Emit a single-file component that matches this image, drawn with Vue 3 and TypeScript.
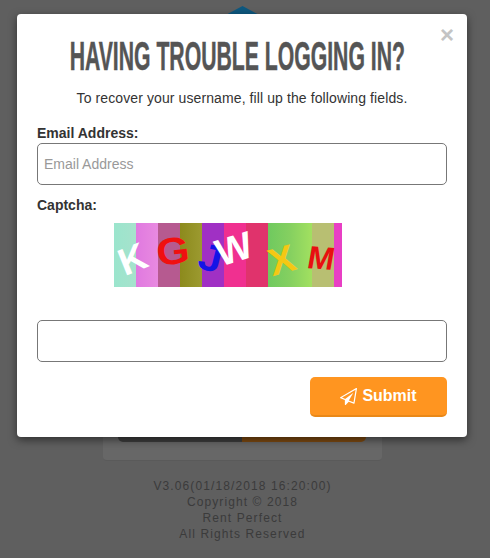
<script setup lang="ts">
const stripes = [
  { w: 22, c: 'linear-gradient(90deg,#9be5cd,#a6e2cc)' },
  { w: 22, c: 'linear-gradient(90deg,#e079e0,#e88ae0)' },
  { w: 22, c: '#b65a90' },
  { w: 22, c: 'linear-gradient(90deg,#8c8a1c,#9c9a30)' },
  { w: 22, c: '#a030c4' },
  { w: 22, c: '#f03090' },
  { w: 22, c: '#e0336c' },
  { w: 22, c: 'linear-gradient(90deg,#6fc95f,#85d060)' },
  { w: 22, c: 'linear-gradient(90deg,#85d060,#a2e060)' },
  { w: 22, c: '#b8bf72' },
  { w: 8, c: '#e83fc4' },
]
const letters = [
  { t: 'K', x: 5, y: 17, s: 38, r: -22, k: 0, c: '#fff', sx: 1 },
  { t: 'G', x: 44, y: 9, s: 38, r: -6, k: 0, c: '#f01010', sx: 1.12 },
  { t: 'J', x: 86, y: 16, s: 38, r: 14, k: 0, c: '#1414e6', sx: 1.1 },
  { t: 'W', x: 102, y: 7, s: 38, r: -17, k: 0, c: '#fff', sx: 1.02 },
  { t: 'X', x: 155, y: 18, s: 38, r: -16, k: 0, c: '#f4c814', sx: 1.05 },
  { t: 'M', x: 194, y: 19, s: 32, r: 4, k: -6, c: '#e81010', sx: 1 },
]
</script>

<template>
  <div class="page">
    <div class="column">
      <div class="logo"></div>
      <div class="card">
        <div class="card-btns"><span class="dark"></span><span class="orange"></span></div>
      </div>
      <footer class="foot">
        <div>V3.06(01/18/2018 16:20:00)</div>
        <div>Copyright © 2018</div>
        <div>Rent Perfect</div>
        <div>All Rights Reserved</div>
      </footer>
    </div>

    <div class="backdrop">
      <div class="modal">
        <span class="close">×</span>
        <h1><span>Having trouble logging in?</span></h1>
        <p class="lead">To recover your username, fill up the following fields.</p>
        <label class="lbl">Email Address:</label>
        <input class="field" type="text" placeholder="Email Address" />
        <label class="lbl cap">Captcha:</label>
        <div class="captcha">
          <span v-for="(s, i) in stripes" :key="i" :style="{ width: s.w + 'px', background: s.c }"></span>
          <b
            v-for="l in letters"
            :key="l.t"
            :style="{ left: l.x + 'px', top: l.y + 'px', fontSize: l.s + 'px', color: l.c, transform: `rotate(${l.r}deg) skewX(${l.k}deg) scaleX(${l.sx})` }"
          >{{ l.t }}</b>
        </div>
        <input class="field second" type="text" />
        <div class="actions">
          <button class="submit" type="button">
            <svg viewBox="0 0 1792 1792" width="17" height="17" aria-hidden="true">
              <path fill="#fff" d="M1764 11q33 24 27 64l-256 1536q-5 29-32 45-14 8-31 8-11 0-24-5l-527-215-298 327q-18 21-47 21-14 0-23-4-19-7-30-23.5t-11-36.5v-452l-472-193q-37-14-40-55-3-39 32-59l1664-960q35-21 68 2zm-342 1499l221-1323-1434 827 336 137 863-639-478 797z"/>
            </svg>
            Submit
          </button>
        </div>
      </div>
    </div>
  </div>
</template>

<style scoped>
.page {
  position: relative;
  width: 490px;
  height: 558px;
  overflow: hidden;
  background: #bebebf;
  font-family: "Liberation Sans", Arial, sans-serif;
}
.column { width: 485px; }
.logo {
  width: 30px;
  height: 8px;
  margin: 6px auto 29px;
  background: #1cb0ff;
  clip-path: polygon(50% 0, 100% 100%, 0 100%);
}
.card {
  box-sizing: border-box;
  width: 279px;
  height: 418px;
  margin: 0 auto;
  padding: 394px 16px 0 15px;
  background: #cfcfcf;
  border-radius: 4px;
  border-bottom: 1px solid #b4b4b4;
}
.card-btns {
  display: flex;
  height: 5px;
  border-radius: 0 0 6px 6px;
  overflow: hidden;
}
.dark { width: 124px; background: #7c7c7c; }
.orange { flex: 1; background: #ff9520; }
.foot {
  margin-top: 17px;
  text-align: center;
  font-size: 12px;
  line-height: 16px;
  letter-spacing: 1.1px;
  color: #777;
}
.backdrop {
  position: absolute;
  inset: 0;
  background: rgba(0, 0, 0, 0.5);
}
.modal {
  position: absolute;
  box-sizing: border-box;
  left: 17px;
  top: 14px;
  width: 450px;
  height: 423px;
  padding: 0 20px;
  background: #fff;
  border-radius: 4px;
  box-shadow: 0 3px 9px rgba(0, 0, 0, 0.5);
}
.close {
  position: absolute;
  top: 8px;
  right: 13px;
  font-size: 24px;
  line-height: 26px;
  font-weight: 700;
  color: #c4c4c4;
}
h1 {
  display: flex;
  justify-content: center;
  margin: 24px 0 0;
  padding-right: 10px;
  height: 36px;
  font-size: 40px;
  line-height: 36px;
  font-weight: 700;
  text-transform: uppercase;
  white-space: nowrap;
  color: #555;
  -webkit-text-stroke: 0.5px #555;
}
h1 span {
  flex: none;
  transform: scaleX(0.53);
}
.lead {
  margin: 14px 0 0;
  font-size: 14px;
  line-height: 20px;
  letter-spacing: 0.1px;
  text-align: center;
  color: #333;
}
.lbl {
  display: block;
  margin-top: 17px;
  font-size: 14px;
  line-height: 16px;
  font-weight: 700;
  color: #333;
}
.cap { margin-top: 12px; }
.field {
  display: block;
  box-sizing: border-box;
  width: 410px;
  height: 42px;
  margin-top: 2px;
  padding: 0 6px;
  background: #fff;
  border: 1px solid #777;
  border-radius: 5px;
  outline: none;
  font: 14px "Liberation Sans", Arial, sans-serif;
}
.field::placeholder { color: #999; opacity: 1; }
.captcha {
  position: relative;
  display: flex;
  width: 228px;
  height: 64px;
  margin: 10px 0 0 77px;
}
.captcha span { display: block; height: 100%; }
.captcha b {
  position: absolute;
  font-family: "Liberation Sans", Arial, sans-serif;
  font-weight: 700;
  line-height: 1;
}
.second { margin-top: 33px; }
.actions {
  display: flex;
  justify-content: flex-end;
  margin-top: 15px;
}
.submit {
  display: flex;
  align-items: center;
  justify-content: center;
  gap: 5px;
  box-sizing: border-box;
  width: 137px;
  height: 40px;
  border: 0;
  border-bottom: 2px solid #e98818;
  border-radius: 5px;
  background: #ff9520;
  color: #fff;
  font: 700 16px "Liberation Sans", Arial, sans-serif;
}
</style>
